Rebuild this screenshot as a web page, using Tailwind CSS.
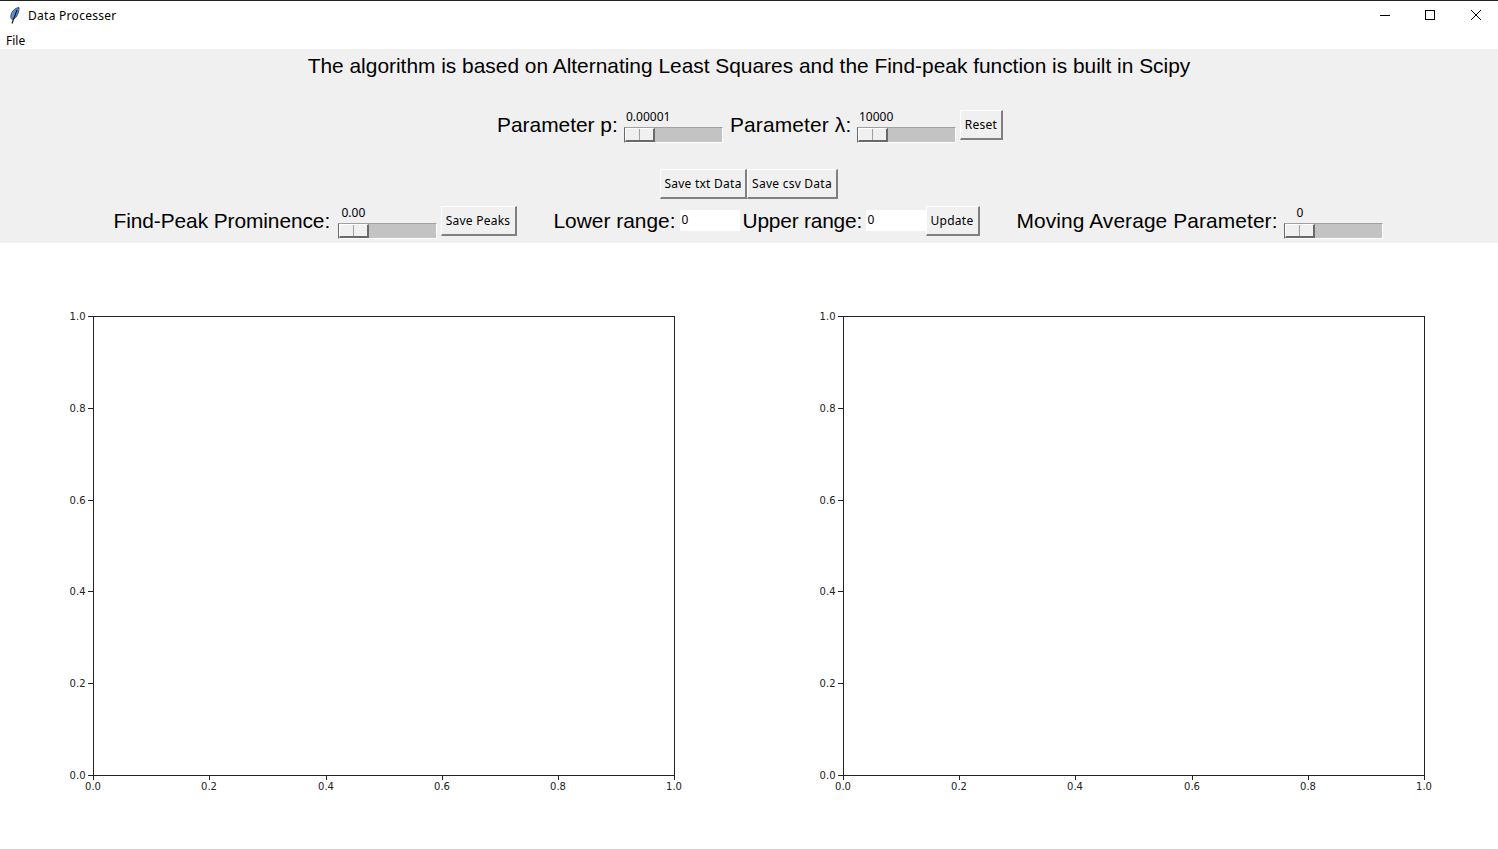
<!DOCTYPE html>
<html>
<head>
<meta charset="utf-8">
<title>Data Processer</title>
<script src="https://cdn.jsdelivr.net/npm/@tailwindcss/browser@4"></script>
</head>
<body class="bg-white overflow-hidden font-['Noto_Sans','Liberation_Sans',sans-serif] text-black">
<div class="w-[1498px] h-[849px] flex flex-col overflow-hidden border-t border-[#222]">
  <!-- title bar -->
  <div class="h-[29px] flex items-center shrink-0 relative">
    <svg class="ml-[9px] w-[12px] h-[18px]" viewBox="0 0 12 18">
      <path d="M10 0.5C6 1 3 4 2 8C1.5 10 1.8 11.5 3 12.5C5.8 12 8 9.5 9 6.5C9.7 4.5 10.2 2.5 10 0.5Z" fill="#5b8fd6" stroke="#1c3558" stroke-width="0.8"/>
      <path d="M8 3L3 16.5" stroke="#111" stroke-width="1.1" fill="none"/>
    </svg>
    <span class="ml-[7px] text-[12px] tracking-[0.28px] leading-none">Data Processer</span>
    <div class="ml-auto flex items-center h-full">
      <svg class="w-[46px] h-[29px]" viewBox="0 0 46 29"><path d="M19 14.5H29" stroke="#000" stroke-width="1"/></svg>
      <svg class="w-[45px] h-[29px]" viewBox="0 0 45 29"><rect x="18.5" y="9.5" width="9" height="9" fill="none" stroke="#000"/></svg>
      <svg class="w-[46px] h-[29px]" viewBox="0 0 46 29"><path d="M19 9L29 19M29 9L19 19" stroke="#000" stroke-width="1" fill="none"/></svg>
    </div>
  </div>
  <!-- menu -->
  <div class="h-[19px] flex items-center pl-[6px] pt-[2px] text-[12px] leading-none shrink-0">File</div>
  <!-- control panel -->
  <div class="bg-[#f0f0f0] h-[194px] shrink-0 flex flex-col items-center">
    <div class="h-[34px] flex items-center justify-center font-['Liberation_Sans',sans-serif] text-[20.9px] leading-none">The algorithm is based on Alternating Least Squares and the Find-peak function is built in Scipy</div>
    <!-- row: p and lambda -->
    <div class="mt-[27px] h-[30px] flex items-center ml-[2px]">
      <div class="w-[127px] font-['Liberation_Sans',sans-serif] text-[20.9px] leading-none">Parameter p:</div>
      <div class="w-[99px] h-[33px] mt-[2px] flex flex-col">
        <div class="h-[17px] pl-[2px] text-[12px] leading-[14px]">0.00001</div>
        <div class="h-[16px] bg-[#c3c3c3] border-t border-t-[#a0a0a0] border-l border-l-[#696969] border-r border-b border-r-white border-b-white">
          <div class="w-[30px] h-[14px] flex bg-[#f0f0f0] border-t border-l border-t-white border-l-white border-r-2 border-b-2 border-r-[#696969] border-b-[#696969]"><div class="w-[14px] border-r border-[#a0a0a0]"></div></div>
        </div>
      </div>
      <div class="w-[134px] pl-[7px] font-['Liberation_Sans','DejaVu_Sans',sans-serif] text-[20.9px] tracking-[0.15px] leading-none">Parameter λ:</div>
      <div class="w-[99px] h-[33px] mt-[2px] flex flex-col">
        <div class="h-[17px] pl-[2px] text-[12px] leading-[14px]">10000</div>
        <div class="h-[16px] bg-[#c3c3c3] border-t border-t-[#a0a0a0] border-l border-l-[#696969] border-r border-b border-r-white border-b-white">
          <div class="w-[30px] h-[14px] flex bg-[#f0f0f0] border-t border-l border-t-white border-l-white border-r-2 border-b-2 border-r-[#696969] border-b-[#696969]"><div class="w-[14px] border-r border-[#a0a0a0]"></div></div>
        </div>
      </div>
      <button class="ml-[4px] w-[43px] h-[30px] bg-[#f0f0f0] border-t border-l border-white border-r-2 border-b-2 border-r-[#808080] border-b-[#808080] text-[12px] tracking-[0.25px] leading-none">Reset</button>
    </div>
    <!-- row: save buttons -->
    <div class="mt-[29px] h-[30px] flex">
      <button class="w-[87px] h-[30px] bg-[#f0f0f0] border-t border-l border-white border-r-2 border-b-2 border-r-[#808080] border-b-[#808080] text-[12px] tracking-[0.25px] leading-none">Save txt Data</button>
      <button class="w-[91px] h-[30px] bg-[#f0f0f0] border-t border-l border-white border-r-2 border-b-2 border-r-[#808080] border-b-[#808080] text-[12px] tracking-[0.25px] leading-none">Save csv Data</button>
    </div>
    <!-- row: peaks, range, moving average -->
    <div class="mt-[7px] mr-[2px] h-[30px] flex items-center">
      <div class="w-[224px] font-['Liberation_Sans',sans-serif] text-[20.9px] tracking-[-0.08px] leading-none">Find-Peak Prominence:</div>
      <div class="w-[99px] h-[33px] mt-[2px] flex flex-col">
        <div class="h-[17px] pl-[4px] text-[12px] leading-[14px]">0.00</div>
        <div class="h-[16px] bg-[#c3c3c3] border-t border-t-[#a0a0a0] border-l border-l-[#696969] border-r border-b border-r-white border-b-white">
          <div class="w-[30px] h-[14px] flex bg-[#f0f0f0] border-t border-l border-t-white border-l-white border-r-2 border-b-2 border-r-[#696969] border-b-[#696969]"><div class="w-[14px] border-r border-[#a0a0a0]"></div></div>
        </div>
      </div>
      <button class="ml-[4px] w-[76px] h-[30px] bg-[#f0f0f0] border-t border-l border-white border-r-2 border-b-2 border-r-[#808080] border-b-[#808080] text-[12px] tracking-[0.25px] leading-none">Save Peaks</button>
      <div class="ml-[37px] w-[126px] font-['Liberation_Sans',sans-serif] text-[20.9px] leading-none">Lower range:</div>
      <div class="w-[60px] h-[21px] mb-[2px] bg-white pl-[2px] text-[12px] leading-[20px]">0</div>
      <div class="w-[126px] pl-[3px] font-['Liberation_Sans',sans-serif] text-[20.9px] tracking-[-0.2px] leading-none">Upper range:</div>
      <div class="w-[60px] h-[21px] mb-[2px] bg-white pl-[2px] text-[12px] leading-[20px]">0</div>
      <button class="w-[54px] h-[30px] bg-[#f0f0f0] border-t border-l border-white border-r-2 border-b-2 border-r-[#808080] border-b-[#808080] text-[12px] tracking-[0.25px] leading-none">Update</button>
      <div class="ml-[37px] w-[267px] font-['Liberation_Sans',sans-serif] text-[20.9px] tracking-[0.1px] leading-none">Moving Average Parameter:</div>
      <div class="w-[99px] h-[33px] mt-[2px] flex flex-col">
        <div class="h-[17px] pl-[13px] text-[12px] leading-[14px]">0</div>
        <div class="h-[16px] bg-[#c3c3c3] border-t border-t-[#a0a0a0] border-l border-l-[#696969] border-r border-b border-r-white border-b-white">
          <div class="w-[30px] h-[14px] flex bg-[#f0f0f0] border-t border-l border-t-white border-l-white border-r-2 border-b-2 border-r-[#696969] border-b-[#696969]"><div class="w-[14px] border-r border-[#a0a0a0]"></div></div>
        </div>
      </div>
    </div>
  </div>
  <!-- plots -->
  <div class="flex-1 flex">
    <svg class="w-[749px] h-[606px] shrink-0" viewBox="0 243 749 606" font-family="DejaVu Sans" font-size="10" fill="#222">
      <rect x="93.5" y="316.5" width="581" height="459" fill="#fff" stroke="#222" stroke-width="1"/>
      <path d="M93.5 775V780M209.5 775V780M326.5 775V780M442.5 775V780M558.5 775V780M674.5 775V780M88 775.5H93M88 683.5H93M88 591.5H93M88 500.5H93M88 408.5H93M88 316.5H93" stroke="#222" fill="none"/>
      <g text-anchor="middle"><text x="93" y="790">0.0</text><text x="209" y="790">0.2</text><text x="326" y="790">0.4</text><text x="442" y="790">0.6</text><text x="558" y="790">0.8</text><text x="674" y="790">1.0</text></g>
      <g text-anchor="end"><text x="85.5" y="779">0.0</text><text x="85.5" y="687">0.2</text><text x="85.5" y="595">0.4</text><text x="85.5" y="504">0.6</text><text x="85.5" y="412">0.8</text><text x="85.5" y="320">1.0</text></g>
    </svg>
    <svg class="w-[749px] h-[606px] shrink-0" viewBox="749 243 749 606" font-family="DejaVu Sans" font-size="10" fill="#222">
      <rect x="843.5" y="316.5" width="581" height="459" fill="#fff" stroke="#222" stroke-width="1"/>
      <path d="M843.5 775V780M959.5 775V780M1075.5 775V780M1192.5 775V780M1308.5 775V780M1424.5 775V780M838 775.5H843M838 683.5H843M838 591.5H843M838 500.5H843M838 408.5H843M838 316.5H843" stroke="#222" fill="none"/>
      <g text-anchor="middle"><text x="843" y="790">0.0</text><text x="959" y="790">0.2</text><text x="1075" y="790">0.4</text><text x="1192" y="790">0.6</text><text x="1308" y="790">0.8</text><text x="1424" y="790">1.0</text></g>
      <g text-anchor="end"><text x="835.5" y="779">0.0</text><text x="835.5" y="687">0.2</text><text x="835.5" y="595">0.4</text><text x="835.5" y="504">0.6</text><text x="835.5" y="412">0.8</text><text x="835.5" y="320">1.0</text></g>
    </svg>
  </div>
</div>
</body>
</html>
